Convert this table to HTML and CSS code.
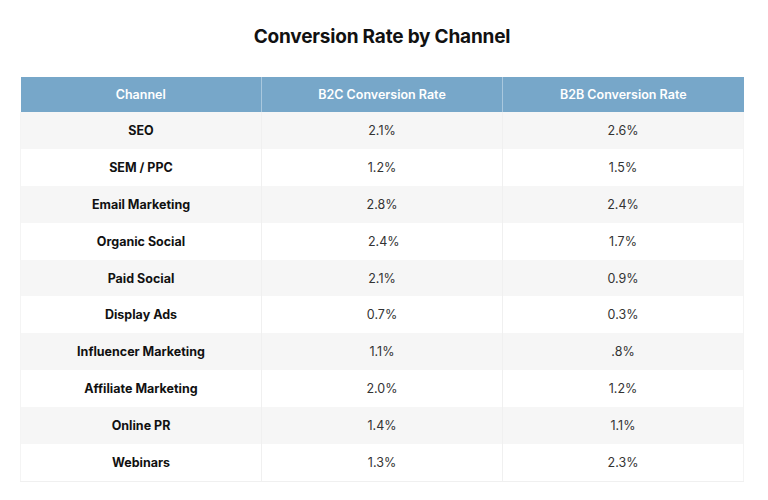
FILE: index.html
```html
<!DOCTYPE html>
<html>
<head>
<meta charset="utf-8">
<link rel="stylesheet" href="styles.css">
</head>
<body>
<div class="page">
  <h1 class="title">Conversion Rate by Channel</h1>
  <table class="rates">
    <thead>
      <tr><th>Channel</th><th>B2C Conversion Rate</th><th>B2B Conversion Rate</th></tr>
    </thead>
    <tbody>
      <tr><td class="ch">SEO</td><td>2.1%</td><td>2.6%</td></tr>
      <tr><td class="ch">SEM / PPC</td><td>1.2%</td><td>1.5%</td></tr>
      <tr><td class="ch">Email Marketing</td><td>2.8%</td><td>2.4%</td></tr>
      <tr><td class="ch">Organic Social</td><td>&nbsp;2.4%</td><td>1.7%</td></tr>
      <tr><td class="ch">Paid Social</td><td>2.1%</td><td>0.9%</td></tr>
      <tr><td class="ch">Display Ads</td><td>0.7%</td><td>0.3%</td></tr>
      <tr><td class="ch">Influencer Marketing</td><td>1.1%</td><td>.8%</td></tr>
      <tr><td class="ch">Affiliate Marketing</td><td>2.0%</td><td>1.2%</td></tr>
      <tr><td class="ch">Online PR</td><td>1.4%</td><td>1.1%</td></tr>
      <tr><td class="ch">Webinars</td><td>1.3%</td><td>2.3%</td></tr>
    </tbody>
  </table>
</div>
</body>
</html>
```
FILE: styles.css
```css
html, body {
  margin: 0;
  padding: 0;
  background: #ffffff;
}
body {
  font-family: Inter, "Liberation Sans", sans-serif;
  color: #222;
}
.page {
  padding: 25px 24px 0 20px;
}
.title {
  margin: 0 0 28px 0;
  font-size: 19px;
  font-weight: 700;
  text-align: center;
  color: #111;
  line-height: 24px;
  letter-spacing: -0.2px;
}
.rates {
  width: 724px;
  border-collapse: collapse;
  table-layout: fixed;
  font-size: 12.5px;
}
.rates th {
  background: #77a7c9;
  color: #ffffff;
  font-weight: 600;
  height: 35px;
  padding: 0;
  text-align: center;
  border-left: 1px solid #a9c8de;
}
.rates th:first-child {
  border-left: none;
}
.rates td {
  height: 36.9px;
  padding: 0;
  text-align: center;
  color: #333;
  border-left: 1px solid #f0f0f0;
}
.rates td:first-child {
  border-left: 1px solid #f4f4f4;
}
.rates td:last-child {
  border-right: 1px solid #f4f4f4;
}
.rates tbody tr:nth-child(odd) td {
  background: #f6f6f6;
}
.rates tbody tr:last-child td {
  border-bottom: 1px solid #f0f0f0;
}
.rates td.ch {
  font-weight: 700;
  color: #111;
}
```
